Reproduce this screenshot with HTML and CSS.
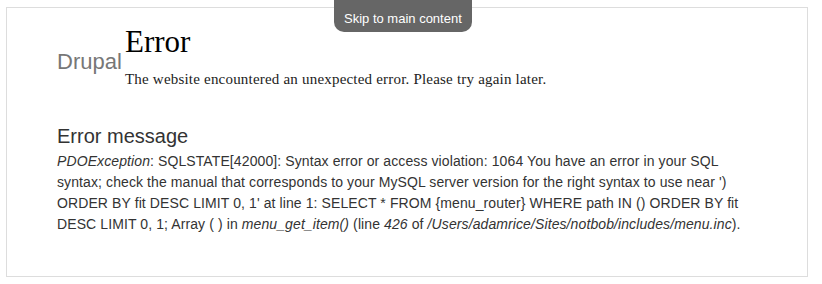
FILE: index.html
```html
<!DOCTYPE html>
<html lang="en">
<head>
  <meta charset="UTF-8" />
  <meta name="viewport" content="width=device-width, initial-scale=1" />
  <title>Error | Drupal</title>
  <link rel="stylesheet" href="styles.css">
</head>
<body>

  <a href="#main-content" class="skip-link">Skip to main content</a>

  <div class="page">
    <div class="header">
      <div class="site-name">Drupal</div>
      <div class="main" id="main-content">
        <h1>Error</h1>
        <p class="intro">The website encountered an unexpected error. Please try again later.</p>
      </div>
    </div>

    <div class="messages">
      <h2>Error message</h2>
      <p><em>PDOException</em>: SQLSTATE[42000]: Syntax error or access violation: 1064 You have an error in your SQL syntax; check the manual that corresponds to your MySQL server version for the right syntax to use near ') ORDER BY fit DESC LIMIT 0, 1' at line 1: SELECT * FROM {menu_router} WHERE path IN () ORDER BY fit DESC LIMIT 0, 1; Array ( ) in <em>menu_get_item()</em> (line <em>426</em> of <em>/Users/adamrice/Sites/notbob/includes/menu.inc</em>).</p>
    </div>
  </div>

</body>
</html>
```

FILE: styles.css
```css
body {
  margin: 0;
  font-family: "Liberation Sans", Arial, sans-serif;
  color: #333;
  background: #fff;
}
.skip-link {
  position: absolute;
  top: 0;
  left: 334px;
  padding: 11px 10px 6px;
  font-size: 13px;
  line-height: 15px;
  color: #fff;
  background: #666;
  text-decoration: none;
  border-radius: 0 0 10px 10px;
}
.page {
  margin: 7px 14px 0 6px;
  border: 1px solid #ddd;
  padding: 19px 51px 41px 50px;
}
.header {
  display: flex;
  align-items: flex-start;
}
.site-name {
  flex: 0 0 68px;
  margin-top: 25px;
  font-size: 22px;
  line-height: 20px;
  color: #777;
}
.main h1 {
  margin: 0;
  font-family: "Liberation Serif", Georgia, serif;
  font-size: 31px;
  line-height: 30px;
  font-weight: normal;
  color: #000;
}
.intro {
  margin: 13px 0 0;
  font-family: "Liberation Serif", Georgia, serif;
  font-size: 15px;
  line-height: 18px;
  letter-spacing: 0.2px;
  color: #222;
}
.messages h2 {
  margin: 36px 0 0;
  font-size: 20px;
  line-height: 24px;
  font-weight: normal;
  color: #333;
}
.messages p {
  margin: 3px 0 0;
  font-size: 14px;
  line-height: 21px;
  letter-spacing: 0.1px;
  color: #333;
}
```
